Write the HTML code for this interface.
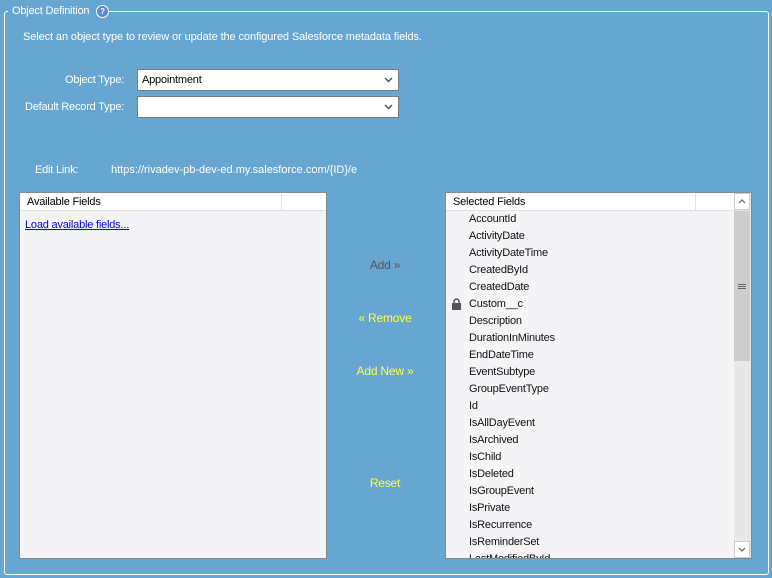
<!DOCTYPE html>
<html><head><style>
body{margin:0;width:772px;height:578px;background:#67a6d0;font-family:"Liberation Sans",sans-serif;font-size:11px;letter-spacing:-0.2px;position:relative;overflow:hidden;color:#fff}
.a{position:absolute}
.frame{left:4px;top:11px;width:763px;height:562px;border:1px solid #fff;border-radius:3px}
.sel{background:#fff;border:1px solid #7a7a7a;height:20px;color:#000}
.sel span{position:absolute;left:4px;top:4px}
.sel svg{position:absolute;right:5px;top:7px}
.list{background:#f5f5f7;border:1px solid #8a8a8a;color:#000}
.hdr{position:absolute;left:0;top:0;height:17px;border-bottom:1px solid #e0e0e0;background:#fff}
.it{position:absolute;left:23px;color:#111;margin-top:1px}
.btn{position:absolute;width:100px;text-align:center;color:#ffff3c;font-size:12px}
</style></head><body>
<div class="a frame"></div>
<div class="a" style="left:8px;top:4px;background:#67a6d0;height:14px;width:101px"></div>
<div class="a" style="left:12px;top:5px">Object Definition</div>
<div class="a" style="left:96px;top:5px;width:11px;height:11px;border-radius:50%;background:#5a8bc0;border:1px solid #fff;font-size:8px;text-align:center;line-height:11px;font-weight:bold">?</div>
<div class="a" style="left:23px;top:31px;letter-spacing:-0.1px">Select an object type to review or update the configured Salesforce metadata fields.</div>
<div class="a" style="left:65px;top:74px">Object Type:</div>
<div class="a" style="left:25px;top:101px">Default Record Type:</div>
<div class="a sel" style="left:137px;top:69px;width:260px"><span>Appointment</span><svg width="9" height="6"><path d="M1 1l3.5 3.5L8 1" stroke="#555" stroke-width="1.5" fill="none"/></svg></div>
<div class="a sel" style="left:137px;top:96px;width:260px"><svg width="9" height="6"><path d="M1 1l3.5 3.5L8 1" stroke="#555" stroke-width="1.5" fill="none"/></svg></div>
<div class="a" style="left:35px;top:164px">Edit Link:</div>
<div class="a" style="left:111px;top:164px;letter-spacing:0">https://rivadev-pb-dev-ed.my.salesforce.com/{ID}/e</div>
<div class="a list" style="left:19px;top:192px;width:306px;height:365px">
 <div class="hdr" style="width:306px"><div style="position:absolute;left:7px;top:3px">Available Fields</div><div style="position:absolute;left:261px;top:0;height:17px;border-left:1px solid #e0e0e0"></div></div>
 <div style="position:absolute;left:5px;top:26px;color:#0000ee;text-decoration:underline">Load available fields...</div>
</div>
<div class="btn" style="left:335px;top:258px;color:#555">Add »</div>
<div class="btn" style="left:335px;top:311px">« Remove</div>
<div class="btn" style="left:335px;top:364px">Add New »</div>
<div class="btn" style="left:335px;top:476px">Reset</div>
<div class="a list" style="left:445px;top:192px;width:305px;height:365px;overflow:hidden">
 <div class="hdr" style="width:288px"><div style="position:absolute;left:7px;top:3px">Selected Fields</div><div style="position:absolute;left:249px;top:0;height:17px;border-left:1px solid #e0e0e0"></div></div>
 <div style="position:absolute;left:288px;top:0;width:17px;height:365px;background:#e8e8e8">
  <div style="position:absolute;left:0;top:0;width:16px;height:17px;background:#fff;border:1px solid #ccc;box-sizing:border-box"><svg width="14" height="15"><path d="M4 9l3-3 3 3" stroke="#666" stroke-width="1.2" fill="none"/></svg></div>
  <div style="position:absolute;left:0;top:18px;width:16px;height:150px;background:#cdcdcd"></div>
  <div style="position:absolute;left:4px;top:91px;width:8px;height:1px;background:#666;box-shadow:0 2px 0 #666,0 4px 0 #666"></div>
  <div style="position:absolute;left:0;top:348px;width:16px;height:17px;background:#fff;border:1px solid #ccc;box-sizing:border-box"><svg width="14" height="15"><path d="M4 6l3 3 3-3" stroke="#666" stroke-width="1.2" fill="none"/></svg></div>
 </div>
 <div class="it" style="top:19px">AccountId</div>
 <div class="it" style="top:36px">ActivityDate</div>
 <div class="it" style="top:53px">ActivityDateTime</div>
 <div class="it" style="top:70px">CreatedById</div>
 <div class="it" style="top:87px">CreatedDate</div>
 <svg style="position:absolute;left:5px;top:105px" width="11" height="12"><rect x="1" y="5" width="9" height="7" fill="#555"/><path d="M3 5V3.5a2.5 2.5 0 0 1 5 0V5" stroke="#555" stroke-width="1.5" fill="none"/></svg>
 <div class="it" style="top:104px">Custom__c</div>
 <div class="it" style="top:121px">Description</div>
 <div class="it" style="top:138px">DurationInMinutes</div>
 <div class="it" style="top:155px">EndDateTime</div>
 <div class="it" style="top:172px">EventSubtype</div>
 <div class="it" style="top:189px">GroupEventType</div>
 <div class="it" style="top:206px">Id</div>
 <div class="it" style="top:223px">IsAllDayEvent</div>
 <div class="it" style="top:240px">IsArchived</div>
 <div class="it" style="top:257px">IsChild</div>
 <div class="it" style="top:274px">IsDeleted</div>
 <div class="it" style="top:291px">IsGroupEvent</div>
 <div class="it" style="top:308px">IsPrivate</div>
 <div class="it" style="top:325px">IsRecurrence</div>
 <div class="it" style="top:342px">IsReminderSet</div>
 <div class="it" style="top:359px">LastModifiedById</div>
</div>
</body></html>
